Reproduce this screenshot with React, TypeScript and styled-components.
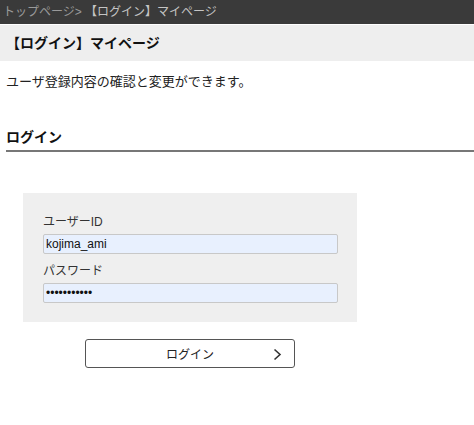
import React from 'react';
import styled, { createGlobalStyle } from 'styled-components';

const GlobalStyle = createGlobalStyle`
  html, body {
    margin: 0;
    padding: 0;
    background: #fff;
  }
  body {
    font-family: "Liberation Sans", "Noto Sans CJK JP", sans-serif;
    color: #222;
  }
`;

const Page = styled.div`
  width: 474px;
  display: flex;
  flex-direction: column;
`;

const Breadcrumb = styled.div`
  height: 24px;
  background: #3a3a3a;
  font-size: 12px;
  line-height: 24px;
  padding-left: 3px;
  white-space: nowrap;
`;

const Crumb = styled.span<{ $current?: boolean }>`
  color: ${(p) => (p.$current ? '#c4c4c4' : '#9a9a9a')};
`;

const TitleBar = styled.h1`
  margin: 1px 0 0;
  height: 36px;
  background: #eeeeee;
  font-size: 14px;
  font-weight: bold;
  line-height: 36px;
  color: #111;
  padding-left: 6px;
`;

const Description = styled.p`
  margin: 12px 0 0 6px;
  font-size: 13px;
  line-height: 18px;
  color: #222;
`;

const SectionTitle = styled.h2`
  margin: 36px 0 0 6px;
  padding-bottom: 3px;
  font-size: 14px;
  font-weight: bold;
  line-height: 20px;
  color: #111;
  border-bottom: 2px solid #777;
`;

const FormBox = styled.form`
  margin: 41px 0 0 23px;
  width: 334px;
  height: 129px;
  box-sizing: border-box;
  background: #efefef;
  padding: 21px 19px 0 20px;
  display: flex;
  flex-direction: column;
`;

const Field = styled.div`
  display: flex;
  flex-direction: column;
  gap: 3px;
  margin-bottom: 9px;
`;

const Label = styled.label`
  font-size: 12px;
  line-height: 17px;
  color: #333;
`;

const Input = styled.input`
  width: 295px;
  height: 20px;
  box-sizing: border-box;
  border: 1px solid #c8c8c8;
  border-radius: 2px;
  background: #e8f0fe;
  font-family: "Liberation Sans", sans-serif;
  font-size: 12px;
  padding: 0 2px;
  color: #111;
  outline: none;
`;

const ButtonRow = styled.div`
  margin: 17px 0 0 85px;
`;

const LoginButton = styled.button`
  width: 210px;
  height: 29px;
  box-sizing: border-box;
  border: 1px solid #555;
  border-radius: 3px;
  background: #fff;
  display: flex;
  align-items: center;
  justify-content: center;
  position: relative;
  font-family: "Liberation Sans", "Noto Sans CJK JP", sans-serif;
  font-size: 12px;
  color: #222;
  cursor: pointer;
`;

const Chevron = styled.svg`
  position: absolute;
  right: 12px;
  top: 8px;
`;

const App: React.FC = () => {
  return (
    <Page>
      <GlobalStyle />
      <Breadcrumb>
        <Crumb>トップページ&gt; </Crumb>
        <Crumb $current>【ログイン】マイページ</Crumb>
      </Breadcrumb>
      <TitleBar>【ログイン】マイページ</TitleBar>
      <Description>ユーザ登録内容の確認と変更ができます。</Description>
      <SectionTitle>ログイン</SectionTitle>
      <FormBox onSubmit={(e) => e.preventDefault()}>
        <Field>
          <Label>ユーザーID</Label>
          <Input type="text" defaultValue="kojima_ami" />
        </Field>
        <Field>
          <Label>パスワード</Label>
          <Input type="password" defaultValue="kojimaami01" />
        </Field>
      </FormBox>
      <ButtonRow>
        <LoginButton type="button">
          ログイン
          <Chevron width="9" height="13" viewBox="0 0 9 13">
            <path d="M1.5 1.5 L7 6.5 L1.5 11.5" fill="none" stroke="#333" strokeWidth="1.6" />
          </Chevron>
        </LoginButton>
      </ButtonRow>
    </Page>
  );
};

export default App;
